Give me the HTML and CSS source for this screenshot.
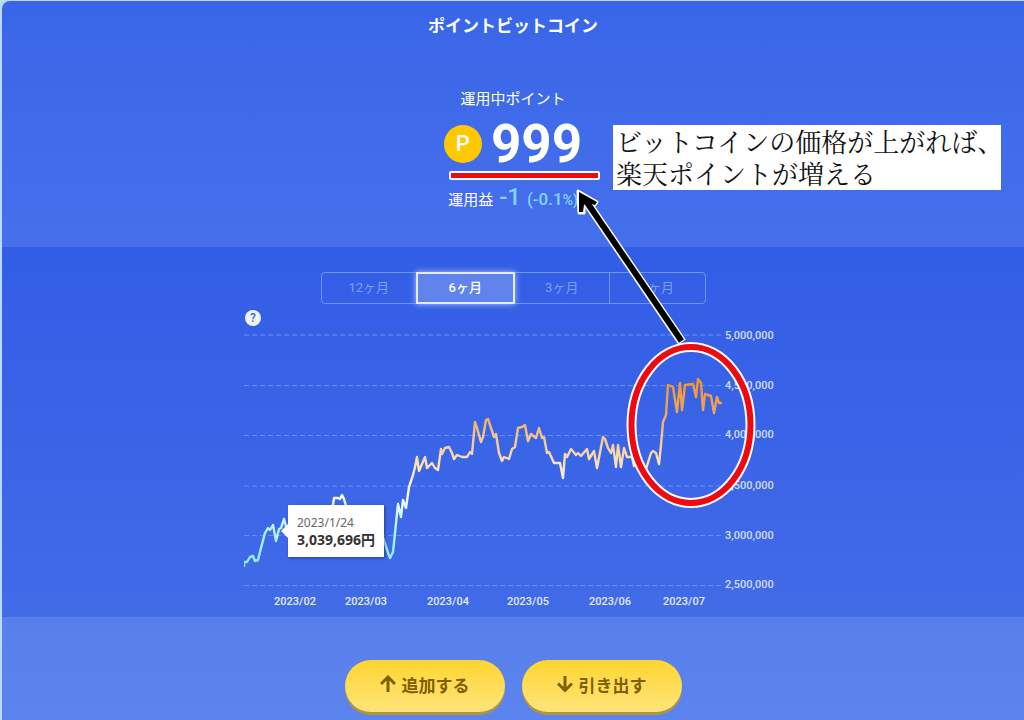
FILE: index.html
```
<!DOCTYPE html>
<html lang="ja">
<head>
    <meta charset="UTF-8">
    <title>ポイントビットコイン</title>
    <link rel="stylesheet" href="styles.css">
</head>
<body>
    <div class="container">
        <header class="summary">
            <h1 class="title">ポイントビットコイン</h1>
            <p class="label">運用中ポイント</p>
            <div class="point">
                <span class="point-icon">P</span>
                <span class="point-num">999</span>
            </div>
            <p class="profit">
                <span>運用益</span>
                <span class="profit-num">-1</span>
                <span class="profit-rate">(-0.1<small>%)</small></span>
            </p>
        </header>

        <main class="chart-area">
            <div class="tab">
                <button type="button">12ヶ月</button>
                <button type="button" class="selected">6ヶ月</button>
                <button type="button">3ヶ月</button>
                <button type="button">1ヶ月</button>
            </div>
            <div class="chart">
                <button type="button" class="help" aria-label="ヘルプ">?</button>
                <svg class="graph" viewBox="244 326 538 284">
                    <defs>
                        <linearGradient id="price" gradientUnits="userSpaceOnUse" x1="0" y1="380" x2="0" y2="565">
                            <stop offset="0" stop-color="#f3962f"/>
                            <stop offset="0.17" stop-color="#f0a458"/>
                            <stop offset="0.3" stop-color="#f5c48c"/>
                            <stop offset="0.46" stop-color="#fae3b8"/>
                            <stop offset="0.62" stop-color="#f8fbec"/>
                            <stop offset="0.8" stop-color="#b4f6fb"/>
                            <stop offset="1" stop-color="#86ecff"/>
                        </linearGradient>
                    </defs>
                    <path class="grid" d="M244 335H722M244 385.500H722M244 435.500H722M244 486H722M244 535.500H722M244 585.500H722"/>
                    <polyline class="line" points="244,567 244,562 247,562 250,557 253,556 255,561 258,560 261,548 265,533 268,528 270,530 273,525 276,541 279,529 281,528 284,519 287,530 296,524 304,531 312,518 321,522 329,507 333,505 334,498 338,498 340,499 342,495 344,499 346,506 354,519 362,508 370,528 378,524 384,540 388,553 390,558 393,552 395,533 398,504 401,517 403,500 406,508 409,487 413,475 415,467 417,457 419,471 425,457 427,468 432,463 435,468 438,470 441,449 442,454 445,448 449,447 452,453 454,459 457,455 462,457 467,457 470,452 472,454 475,422 477,428 481,442 483,437 486,420 488,419 491,428 494,437 496,434 499,453 502,461 504,457 509,459 512,449 515,447 518,428 522,427 525,425 528,441 531,434 536,438 539,428 542,438 544,437 547,453 549,452 554,463 560,463 563,478 565,454 567,457 571,449 576,455 578,453 581,456 587,449 589,459 594,451 597,468 603,437 605,439 608,448 611,453 613,445 616,467 618,445 621,467 624,448 627,457 632,457 634,466 640,458 646,469 651,453 653,451 656,453 659,464 661,445 663,422 666,415 668,385 673,387 677,412 680,383 682,410 685,385 693,384 696,397 698,379 701,383 703,410 705,394 711,396 714,413 717,397 719,403 722,403"/>
                    <g class="axis">
                        <text x="725" y="339">5,000,000</text>
                        <text x="725" y="389">4,500,000</text>
                        <text x="725" y="438">4,000,000</text>
                        <text x="725" y="489">3,500,000</text>
                        <text x="725" y="539">3,000,000</text>
                        <text x="725" y="588">2,500,000</text>
                    </g>
                    <g class="axis month">
                        <text x="295" y="605">2023/02</text>
                        <text x="366" y="605">2023/03</text>
                        <text x="448" y="605">2023/04</text>
                        <text x="528" y="605">2023/05</text>
                        <text x="610" y="605">2023/06</text>
                        <text x="684" y="605">2023/07</text>
                    </g>
                </svg>
                <div class="tooltip">
                    <span>2023/1/24</span>
                    <b>3,039,696円</b>
                </div>
            </div>
        </main>

        <footer class="btn-box">
            <button type="button" class="btn">
                <svg width="16" height="18" viewBox="0 0 16 18"><path d="M8 17V2M1 9L8 2L15 9"/></svg>
                追加する
            </button>
            <button type="button" class="btn">
                <svg width="16" height="18" viewBox="0 0 16 18"><path d="M8 1V15M1 8.500L8 15.500L15 8.500"/></svg>
                引き出す
            </button>
        </footer>

        <!-- 注釈 -->
        <p class="note">ビットコインの価格が上がれば、<br>楽天ポイントが増える</p>
        <svg class="mark" width="340" height="350" viewBox="440 165 340 350">
            <rect x="449" y="171" width="151" height="9" rx="2" fill="#fff"/>
            <rect x="451" y="173" width="147" height="5" fill="#ee0a10"/>
            <path d="M682 342L586 201" stroke="#fff" stroke-width="9"/>
            <path d="M578 191L597 202L595 205L590 204L584 207L584 213L579 213Z" fill="#fff" stroke="#fff" stroke-width="3" stroke-linejoin="round"/>
            <path d="M681.500 341L584 198" stroke="#000" stroke-width="6"/>
            <path d="M579 192L597 202L595 205L587 203L584 205L583 212L579 212Z" fill="#000"/>
            <ellipse cx="691" cy="425" rx="59.500" ry="78" fill="none" stroke="#fff" stroke-width="10"/>
            <ellipse cx="691" cy="425" rx="59.500" ry="78" fill="none" stroke="#ee0a10" stroke-width="6"/>
        </svg>
    </div>
</body>
</html>
```
FILE: styles.css
```
*{
    padding: 0;
    margin: 0;
    box-sizing: border-box;
}
body{
    background: #b9dafa;
    font-family: Roboto, "Noto Sans CJK JP", sans-serif;
    color: #fff;
}
button{
    font-family: inherit;
    border: none;
    cursor: pointer;
}
.container{
    position: relative;
    display: flex;
    flex-direction: column;
    min-height: calc(100vh - 1px);
    margin: 1px 0 0 2px;
    border-radius: 8px 0 0 0;
    overflow: hidden;
}

/* summary */
.summary{
    display: flex;
    flex-direction: column;
    align-items: center;
    height: 246px;
    padding-top: 12px;
    background: linear-gradient(#3966e8, #466feb);
}
.title{
    font-size: 17px;
    line-height: 26px;
    font-weight: bold;
}
.label{
    margin-top: 48px;
    font-size: 15px;
    line-height: 24px;
}
.point{
    display: flex;
    align-items: center;
    gap: 9px;
    height: 66px;
}
.point-icon{
    width: 38px;
    height: 38px;
    border-radius: 50%;
    background: #ffc800;
    font-size: 22px;
    line-height: 38px;
    font-weight: 500;
    text-align: center;
}
.point-num{
    font-size: 53px;
    line-height: 66px;
    font-weight: bold;
}
.profit{
    display: flex;
    align-items: baseline;
    gap: 6px;
    margin-top: 6px;
    font-size: 15px;
    line-height: 28px;
}
.profit-num{
    color: #7fd6ff;
    font-size: 24px;
    font-weight: 500;
}
.profit-rate{
    color: #7fd6ff;
    font-size: 17px;
    font-weight: 500;
}
.profit-rate small{
    font-size: 14px;
}

/* chart */
.chart-area{
    display: flex;
    flex-direction: column;
    align-items: center;
    height: 370px;
    padding-top: 25px;
    background: linear-gradient(#325de6, #426be8);
}
.tab{
    display: flex;
    width: 385px;
    height: 32px;
    border: 1px solid #6f93f4;
    border-radius: 4px;
}
.tab button{
    flex: 1;
    padding-bottom: 3px;
    background: none;
    color: #7f9df3;
    font-size: 13px;
    border-left: 1px solid #6f93f4;
}
.tab button:first-child{
    border-left: none;
}
.tab .selected{
    margin: -1px 0;
    border: 2px solid #e4ecff;
    background: #6183ec;
    color: #fff;
    font-weight: 500;
    box-shadow: 0 0 6px #b4c8ff;
}
.tab .selected + button{
    border-left: none;
}
.chart{
    position: relative;
    width: 538px;
    padding-top: 6px;
}
.help{
    display: block;
    width: 16px;
    height: 16px;
    margin-left: 1px;
    border-radius: 50%;
    background: #eef3ff;
    color: #3f68e4;
    font-size: 12px;
    line-height: 16px;
    font-weight: 500;
}
.graph{
    display: block;
    width: 100%;
}
.grid{
    stroke: #6a8df0;
    stroke-width: 1;
    stroke-dasharray: 5 3;
}
.line{
    fill: none;
    stroke: url(#price);
    stroke-width: 2.4;
    stroke-linejoin: round;
}
.axis{
    fill: #d3defc;
    font-size: 11px;
    font-weight: 500;
}
.month{
    text-anchor: middle;
    fill: #e4ebfe;
}
.tooltip{
    position: absolute;
    left: 44px;
    top: 201px;
    width: 96px;
    padding: 9px 0 9px 9px;
    background: #fff;
    color: #666;
    font-family: "Noto Sans", "Noto Sans CJK JP", sans-serif;
    font-size: 12px;
    line-height: 17px;
    white-space: nowrap;
    box-shadow: 1px 1px 3px rgba(0, 0, 0, 0.4);
}
.tooltip:before{
    content: "";
    position: absolute;
    left: -7px;
    top: 19px;
    border: 7px solid transparent;
    border-left: none;
    border-right-color: #fff;
}
.tooltip span, .tooltip b{
    display: block;
}
.tooltip b{
    color: #333;
    font-size: 14px;
}

/* buttons */
.btn-box{
    flex: 1;
    display: flex;
    justify-content: center;
    gap: 17px;
    padding-top: 43px;
    background: linear-gradient(#587fea, #5c84ef);
}
.btn{
    display: flex;
    justify-content: center;
    align-items: center;
    gap: 6px;
    width: 160px;
    height: 52px;
    padding-bottom: 4px;
    border-radius: 26px;
    background: linear-gradient(#ffd52f, #ffe47c);
    box-shadow: 0 3px 0 #b39436;
    color: #7d6000;
    font-size: 17px;
    font-weight: bold;
}
.btn path{
    fill: none;
    stroke: #7d6000;
    stroke-width: 3;
}

/* annotation */
.note{
    position: absolute;
    left: calc(50% + 100px);
    top: 124px;
    width: 388px;
    height: 65px;
    padding-left: 3px;
    background: #fff;
    color: #111;
    font-family: "Noto Serif CJK JP", "Noto Sans CJK JP", serif;
    font-size: 26px;
    font-weight: 400;
    line-height: 32px;
    white-space: nowrap;
}
.mark{
    position: absolute;
    left: calc(50% - 73px);
    top: 164px;
    pointer-events: none;
}
```
